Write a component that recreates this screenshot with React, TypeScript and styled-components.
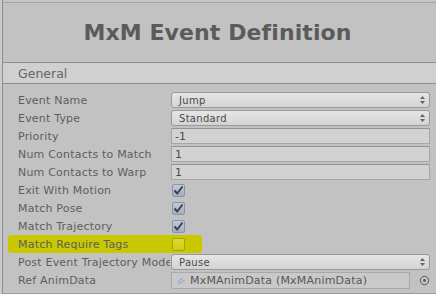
import React from "react";
import styled, { createGlobalStyle } from "styled-components";

const Global = createGlobalStyle`
  html, body { margin: 0; padding: 0; background: #c2c2c2; }
  * { box-sizing: border-box; }
`;

const Frame = styled.div`
  width: 436px;
  height: 294px;
  overflow: hidden;
  background: #c2c2c2;
  border-left: 2px solid #cbcbcb;
  font-family: "DejaVu Sans", sans-serif;
  color: #5a5a5a;
`;

const Inner = styled.div`
  height: 100%;
  border-left: 1px solid #8e8e8e;
  display: flex;
  flex-direction: column;
`;

const TopEdge = styled.div`
  height: 3px;
  border-bottom: 1px solid #a4a4a4;
  background: #c6c6c6;
`;

const Header = styled.div`
  height: 59px;
  display: flex;
  align-items: center;
  justify-content: center;
  font-size: 22px;
  font-weight: bold;
  color: #5b5b5b;
  letter-spacing: 0.1px;
  padding-right: 4px;
`;

const SectionBar = styled.div`
  height: 22px;
  border-top: 1px solid #8f8f8f;
  border-bottom: 1px solid #8f8f8f;
  background: #d0d0d0;
  display: flex;
  align-items: center;
  padding-left: 15px;
  font-size: 12.5px;
  color: #666;
`;

const Body = styled.div`
  padding-top: 7px;
  display: flex;
  flex-direction: column;
  flex: 1;
  border-bottom: 1px solid #9a9a9a;
`;

const Row = styled.div<{ $hl?: boolean; $tall?: boolean }>`
  position: relative;
  height: ${(p) => (p.$tall ? "19px" : "18px")};
  display: grid;
  grid-template-columns: 152px 1fr;
  align-items: center;
  padding-left: 15px;
  padding-right: 6px;
  &::before {
    content: "";
    display: ${(p) => (p.$hl ? "block" : "none")};
    position: absolute;
    left: 5px;
    top: 0;
    width: 194px;
    height: 18px;
    background: #c9c700;
    border-radius: 3px;
    filter: blur(0.6px);
  }
`;

const Label = styled.div`
  position: relative;
  font-size: 11px;
  color: #5e5e5e;
  white-space: nowrap;
  overflow: hidden;
  letter-spacing: 0.2px;
`;

const Field = styled.div`
  margin-left: 1px;
`;

const Dropdown = styled.div`
  height: 16px;
  border: 1px solid #9a9a9a;
  border-radius: 3px;
  background: linear-gradient(#e6e6e6, #d3d3d3);
  display: flex;
  align-items: center;
  justify-content: space-between;
  padding: 0 4px 0 7px;
  font-size: 10px;
  color: #4a4a4a;
  letter-spacing: 0.3px;
`;

const Arrows = styled.svg`
  width: 5px;
  height: 8px;
`;

const TextField = styled.div`
  height: 16px;
  border: 1px solid #a6a6a6;
  border-top-color: #949494;
  background: #d2d2d2;
  display: flex;
  align-items: center;
  padding-left: 3px;
  font-size: 11px;
  color: #4c4c4c;
`;

const Check = styled.div<{ $hl?: boolean }>`
  position: relative;
  margin-left: 1px;
  width: 13px;
  height: 13px;
  border-radius: 2px;
  border: 1px solid ${(p) => (p.$hl ? "#a7a300" : "#8a93a3")};
  background: ${(p) =>
    p.$hl ? "linear-gradient(#dcd838, #cfcc10)" : "linear-gradient(#c0cada, #a3afc2)"};
  display: flex;
  align-items: center;
  justify-content: center;
`;

const ObjField = styled.div`
  display: flex;
  align-items: center;
  gap: 9px;
`;

const ObjBox = styled.div`
  flex: 1;
  height: 17px;
  border: 1px solid #a9a9a9;
  background: #c9c9c9;
  display: flex;
  align-items: center;
  gap: 2px;
  padding-left: 3px;
  font-size: 11px;
  color: #575757;
  letter-spacing: 0.2px;
`;

const ArrowsIcon = () => (
  <Arrows viewBox="0 0 5 8">
    <path d="M2.5 0 L5 3 L0 3 Z M2.5 8 L5 5 L0 5 Z" fill="#666" />
  </Arrows>
);

const Tick = () => (
  <svg width="11" height="11" viewBox="0 0 11 11">
    <path d="M1.5 5.5 L4.2 8.5 L9.5 1.5" stroke="#3e434a" strokeWidth="2" fill="none" />
  </svg>
);

const ScriptIcon = () => (
  <svg width="13" height="13" viewBox="0 0 13 13">
    <path d="M2 8 L8 4 M3 10 L10 6" stroke="#8aa0c8" strokeWidth="1" fill="none" />
    <path d="M4 11 L11 9" stroke="#b8c4dc" strokeWidth="1" fill="none" />
  </svg>
);

const Target = () => (
  <svg width="11" height="11" viewBox="0 0 11 11">
    <circle cx="5.5" cy="5.5" r="4.2" stroke="#5a5a5a" strokeWidth="1" fill="none" />
    <circle cx="5.5" cy="5.5" r="1.4" fill="#5a5a5a" />
  </svg>
);

export default function App() {
  return (
    <>
      <Global />
      <Frame>
        <Inner>
          <TopEdge />
          <Header>MxM Event Definition</Header>
          <SectionBar>General</SectionBar>
          <Body>
            <Row>
              <Label>Event Name</Label>
              <Field>
                <Dropdown>
                  <span>Jump</span>
                  <ArrowsIcon />
                </Dropdown>
              </Field>
            </Row>
            <Row>
              <Label>Event Type</Label>
              <Field>
                <Dropdown>
                  <span>Standard</span>
                  <ArrowsIcon />
                </Dropdown>
              </Field>
            </Row>
            <Row>
              <Label>Priority</Label>
              <Field>
                <TextField>-1</TextField>
              </Field>
            </Row>
            <Row>
              <Label>Num Contacts to Match</Label>
              <Field>
                <TextField>1</TextField>
              </Field>
            </Row>
            <Row>
              <Label>Num Contacts to Warp</Label>
              <Field>
                <TextField>1</TextField>
              </Field>
            </Row>
            <Row>
              <Label>Exit With Motion</Label>
              <Field>
                <Check>
                  <Tick />
                </Check>
              </Field>
            </Row>
            <Row>
              <Label>Match Pose</Label>
              <Field>
                <Check>
                  <Tick />
                </Check>
              </Field>
            </Row>
            <Row>
              <Label>Match Trajectory</Label>
              <Field>
                <Check>
                  <Tick />
                </Check>
              </Field>
            </Row>
            <Row $hl>
              <Label>Match Require Tags</Label>
              <Field>
                <Check $hl />
              </Field>
            </Row>
            <Row>
              <Label>Post Event Trajectory Mode</Label>
              <Field>
                <Dropdown>
                  <span>Pause</span>
                  <ArrowsIcon />
                </Dropdown>
              </Field>
            </Row>
            <Row $tall>
              <Label>Ref AnimData</Label>
              <Field>
                <ObjField>
                  <ObjBox>
                    <ScriptIcon />
                    <span>MxMAnimData (MxMAnimData)</span>
                  </ObjBox>
                  <Target />
                </ObjField>
              </Field>
            </Row>
          </Body>
        </Inner>
      </Frame>
    </>
  );
}
